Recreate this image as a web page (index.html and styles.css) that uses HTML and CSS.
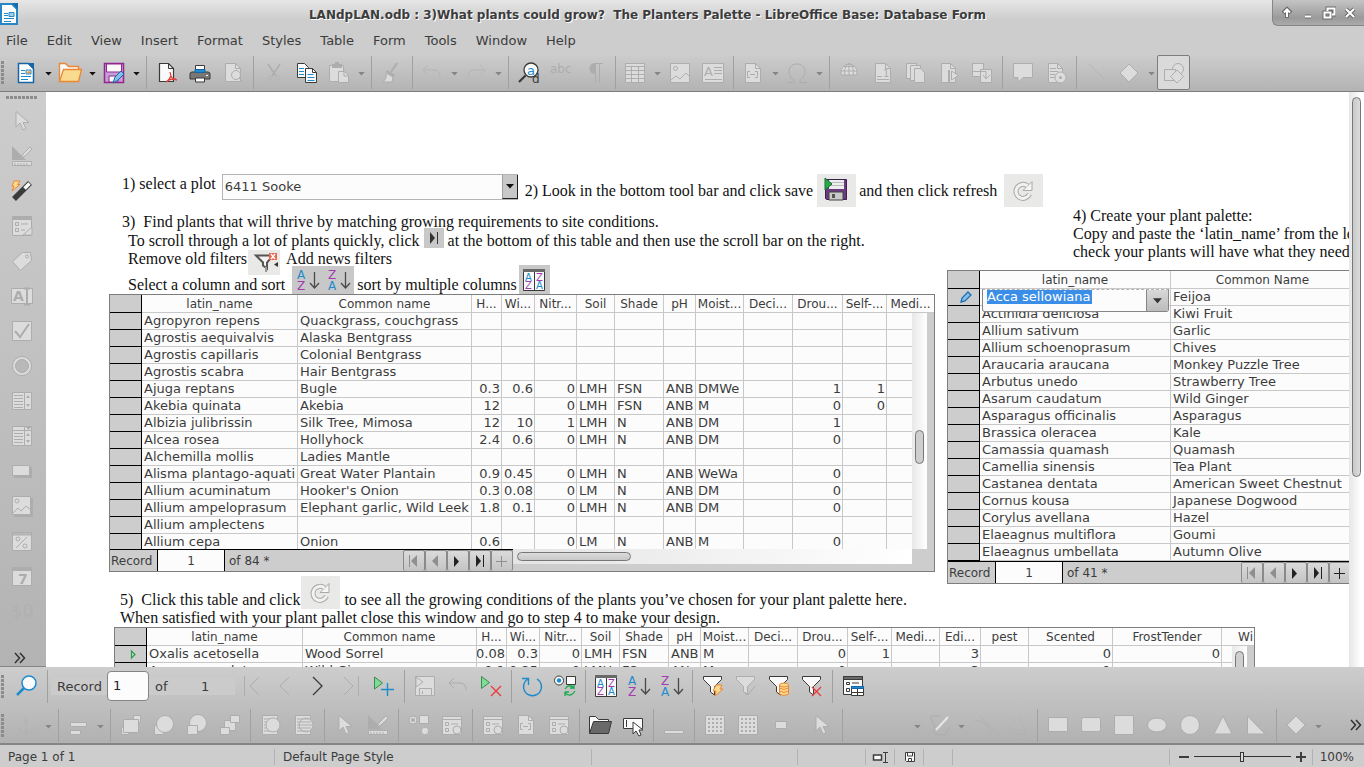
FILE: index.html
```html
<!DOCTYPE html>
<html lang="en">
<head>
<meta charset="utf-8">
<title>LANdpLAN.odb : 3)What plants could grow? The Planters Palette - LibreOffice Base: Database Form</title>
<link rel="stylesheet" href="styles.css">
</head>
<body>
<svg class="sprite" aria-hidden="true">
  <symbol id="new" viewBox="0 0 24 24"><path d="M4.500 2.500h10l5 5v14h-15z" fill="#fff" stroke="#1565a8" stroke-width="1.500"/><path d="M13 2h7v7z" fill="#1565a8" stroke="none"/><path d="M7 9.500h4M7 12.500h4M7 15.500h10M7 18.500h7" stroke="#1e8bcd"/><path d="M12 9h5v4h-5z" fill="#fed7a5" stroke="#1e8bcd"/><path d="M13 12l2-2 2 2z" fill="#ed8733" stroke="none"/></symbol>
  <symbol id="open" viewBox="0 0 24 24"><path d="M1.500 20V2.500h6l3 3h10V9" fill="#fafafa" stroke="#ed8733" stroke-width="1.300"/><path d="M1.500 20.500l4-12h18l-3 12z" fill="#f8db8f" stroke="#ed8733" stroke-width="1.300"/></symbol>
  <symbol id="save" viewBox="0 0 24 24"><path d="M2.500 2.500h19v19h-19z" fill="#c5a0d8" stroke="#92278f" stroke-width="1.500"/><path d="M4.500 3h15v8h-15zM7 21v-6h9v6z" fill="#fafafa" stroke="#92278f"/><path d="M11 22l2-6 6-6 3 3-6 6z" fill="#83beec" stroke="#1565a8"/></symbol>
  <symbol id="pdf" viewBox="0 0 24 24"><path d="M4.500 2.500h9l5 5v13h-14z" fill="#fafafa" stroke="#3a3a38" stroke-width="1.200"/><path d="M13.500 2.500v5h5" stroke="#3a3a38"/><path d="M15 11c1 6 2 7 7 8M16 14c-1 4-3 6-5 7M12 20c3-2 6-2 9-2" stroke="#e2403d" stroke-width="1.300"/></symbol>
  <symbol id="print" viewBox="0 0 24 24"><path d="M7.500 9V4.500h9V9" fill="#fafafa" stroke="#3a3a38"/><path d="M2 13q0-2 2-2h16q2 0 2 2v5H2z" fill="#797774" stroke="#3a3a38"/><path d="M7 8.500h10v3H7z" fill="#1e8bcd" stroke="#1565a8"/><path d="M7.500 17h9v4h-9z" fill="#fafafa" stroke="#3a3a38"/><path d="M18 14.500h2" stroke="#fff"/></symbol>
  <symbol id="preview" viewBox="0 0 24 24"><path class="f" d="M4.500 2.500h10l5 5v13h-15z"/><path d="M14.500 2.500v5h5"/><circle class="f" cx="15" cy="14" r="4.500"/><path d="M18 17l4 4"/></symbol>
  <symbol id="cut" viewBox="0 0 24 24"><path d="M6 3l8 12M18 3l-8 12" stroke-width="1.500"/><circle cx="8" cy="17" r="2" opacity=".4"/><circle cx="16" cy="17" r="2" opacity=".4"/></symbol>
  <symbol id="copy" viewBox="0 0 24 24"><path class="f" d="M2.500 2.500h7l4 4v10h-11z"/><path class="f" d="M10.500 7.500h7l4 4v10h-11z"/><path d="M17.500 7.500v4h4"/><path class="blue" d="M4 7.500h5M4 10.500h5M4 13.500h5M12.500 13.500h6M12.500 16.500h7M12.500 19.500h7"/></symbol>
  <symbol id="paste" viewBox="0 0 24 24"><path class="f" d="M2.500 4.500h14v16h-14z"/><path class="s" d="M5 3h3V1h4v2h3v4H5z"/><path class="f" d="M11.500 10.500h6l4 4v7h-10z"/><path d="M17 10.500v4.500h4"/></symbol>
  <symbol id="brush" viewBox="0 0 24 24"><path d="M17 2l-6 9" stroke-width="2"/><path class="s" d="M7 9l8 5-1 2-8-5z"/><path class="f" d="M6 12l7 4-1 5H3q4-3 3-9z"/></symbol>
  <symbol id="undo" viewBox="0 0 24 24"><path d="M8 4L3 9l5 5M3 9h12q5 1 5 7"/></symbol>
  <symbol id="redo" viewBox="0 0 24 24"><path d="M16 4l5 5-5 5M21 9H9q-5 1-5 7"/></symbol>
  <symbol id="find" viewBox="0 0 24 24"><circle cx="14" cy="9" r="7" fill="#fafafa" stroke="#3a3a38" stroke-width="1.300"/><path d="M8.500 14.500l-6.500 6.500" stroke="#3a3a38" stroke-width="2.200"/><text x="10" y="14" font-size="13" fill="#1e8bcd">a</text><text x="15" y="22" font-size="12" fill="#3a3a38">d</text></symbol>
  <symbol id="abc" viewBox="0 0 24 24"><text x="0" y="12" font-size="12" class="s">abc</text></symbol>
  <symbol id="pilcrow" viewBox="0 0 24 24"><path class="s" d="M12 2a5 5 0 0 0 0 11z"/><path d="M12.500 2v20M16.500 2v20M11 2.500h9"/></symbol>
  <symbol id="table" viewBox="0 0 24 24"><path class="f" d="M2.500 2.500h19v19h-19z"/><path d="M2 5.500h20M2 9.500h20M2 13.500h20M2 17.500h20M8.500 6v15M15.500 6v15"/></symbol>
  <symbol id="image" viewBox="0 0 24 24"><path class="f" d="M2.500 2.500h19v19h-19z"/><circle cx="7.500" cy="7.500" r="2"/><path d="M3 19l5-4 4 3 6-6 4 4"/></symbol>
  <symbol id="textbox" viewBox="0 0 24 24"><path class="f" d="M1.500 2.500h21v19h-21z"/><text x="3" y="15" font-size="13" class="s">A</text><path d="M13 6.500h8M13 9.500h8M13 12.500h8M4 18.500h17"/></symbol>
  <symbol id="field" viewBox="0 0 24 24"><path class="f" d="M4.500 2.500h10l5 5v14h-15z"/><path d="M14.500 2.500v5h5M9 10.500H6.500v6H9M14 10.500h2.500v6H14M9 13.500h5"/></symbol>
  <symbol id="omega" viewBox="0 0 24 24"><path d="M2 21.500h7v-2C1 14 3 3 12 3s11 11 3 16.500v2h7"/></symbol>
  <symbol id="globe" viewBox="0 0 24 24"><path class="f" d="M4.500 14a8 8 0 1 1 15 0z"/><path d="M12 2v13M4 10h16M6 5.500h12M12 2q-6 5-4 12M12 2q6 5 4 12"/></symbol>
  <symbol id="footnote" viewBox="0 0 24 24"><path class="f" d="M4.500 2.500h10l5 5v14h-15z"/><path d="M14.500 2.500v5h5M6 15.500h5M6 18.500h12"/><text x="12" y="16" font-size="10" class="s">1</text></symbol>
  <symbol id="pages" viewBox="0 0 24 24"><path class="f" d="M2.500 2.500h10v15h-10z"/><path class="f" d="M6.500 4.500h10v15h-10z"/><path class="f" d="M10.500 7.500h6l4 4v10h-10z"/></symbol>
  <symbol id="bookmark" viewBox="0 0 24 24"><path class="f" d="M4.500 2.500h9l5 5v14h-14z"/><path d="M13.500 2.500v5h5"/><path d="M12 9v13" stroke-width="2"/><path class="f" d="M14.500 10l7 4.500-7 4.500z"/></symbol>
  <symbol id="xref" viewBox="0 0 24 24"><path class="f" d="M2.500 2.500h11v13h-11z"/><path class="f" d="M10.500 8.500h11v13h-11z"/><path d="M3 10.500h13v7M13 14l3 4 4-4"/></symbol>
  <symbol id="comment" viewBox="0 0 24 24"><path class="f" d="M2.500 2.500h19v14H12l-5 5v-5H2.500z"/></symbol>
  <symbol id="track" viewBox="0 0 24 24"><path class="f" d="M4.500 2.500h9l5 5v14h-14z"/><path d="M13.500 2.500v5h5M6 7.500h6M6 10.500h8M6 13.500h5M6 16.500h5"/><circle class="f" cx="16.500" cy="16.500" r="5.500"/><circle class="s" cx="16.500" cy="16.500" r="1.500"/></symbol>
  <symbol id="line" viewBox="0 0 24 24"><path d="M4 3l16 16"/></symbol>
  <symbol id="diamond" viewBox="0 0 24 24"><path class="f" d="M12 3l9 9-9 9-9-9z"/></symbol>
  <symbol id="shapes" viewBox="0 0 24 24"><circle class="f" cx="16" cy="8" r="5.500"/><path class="f" d="M2.500 8.500h11v11h-11z"/><path class="f" d="M15 9l6.500 6.500L15 22l-6.500-6.500z"/></symbol>
  <symbol id="pointer" viewBox="0 0 24 24"><path class="f" d="M6 2.500v15.500l4-4 3 7 3-1.500-3-6h6z"/></symbol>
  <symbol id="design" viewBox="0 0 24 24"><path class="s" d="M2 2l14 14H2z"/><path d="M11 14l2-4 7-7 2 2-7 7z" class="f"/><path class="f" d="M2.500 17.500h19v4h-19z"/><path d="M5 19v2M8 19v2M11 19v2M14 19v2M17 19v2"/></symbol>
  <symbol id="wand" viewBox="0 0 24 24"><path d="M4 20L20 4" stroke="#3a3a38" stroke-width="5.500"/><path d="M14.500 9.500L19.500 4.500" stroke="#fafafa" stroke-width="3.500"/><path d="M4 2h6L7.500 5.500H10L2 12l2-5H2z" fill="#f8db8f" stroke="#ed8733"/></symbol>
  <symbol id="formprops" viewBox="0 0 24 24"><path class="f" d="M2.500 2.500h19v19h-19z"/><path class="s" d="M2 2h20v4H2z"/><path d="M5.500 8.500h3v3h-3zM5.500 14.500h3v3h-3zM11 10h7M11 16h4"/><path class="f" d="M22 13v8h-9z"/></symbol>
  <symbol id="tag" viewBox="0 0 24 24"><path class="f" d="M2.500 12.500l10-9h8l1 8-11 10z"/><circle cx="17" cy="7.500" r="1.500"/></symbol>
  <symbol id="textfield" viewBox="0 0 24 24"><path class="f" d="M1.500 4.500h21v15h-21z"/><text x="3" y="17" font-size="14" font-weight="bold" class="s">A</text><path d="M14 4.500h6M14 20.500h6M17 5v15" stroke-width="2"/></symbol>
  <symbol id="check" viewBox="0 0 24 24"><path class="f" d="M2.500 2.500h19v19h-19z"/><path d="M5 12l5 6 9-13" stroke-width="2"/></symbol>
  <symbol id="radio" viewBox="0 0 24 24"><circle cx="12" cy="12" r="9.500" class="f"/><circle cx="12" cy="12" r="6.500" fill="#b8b8b8"/></symbol>
  <symbol id="listbox" viewBox="0 0 24 24"><path class="f" d="M2.500 3.500h19v17h-19z"/><path d="M14.500 4v16M4 6.500h9M4 9.500h9M4 12.500h9M4 15.500h9M4 18.500h9"/><path class="s" d="M16 9h4l-2-3zM16 15h4l-2 3z"/></symbol>
  <symbol id="combo" viewBox="0 0 24 24"><path class="f" d="M2.500 2.500h19v19h-19z"/><path d="M14.500 2v19M2 6.500h19M4 9.500h9M4 12.500h9M4 15.500h9M4 18.500h9"/><path class="s" d="M15 2h7l-3.500 4zM16 12h4l-2-3zM16 16h4l-2 3z"/></symbol>
  <symbol id="push" viewBox="0 0 24 24"><path class="s" d="M4 8h18v11H4z"/><path class="f" d="M2.500 6.500h17v10h-17z"/></symbol>
  <symbol id="imgbutton" viewBox="0 0 24 24"><path class="s" d="M4 4h19v19H4z"/><path class="f" d="M2.500 2.500h18v18h-18z"/><circle cx="7" cy="7" r="2"/><path d="M3 19l5-5 3 3 5-5 5 4"/></symbol>
  <symbol id="percent" viewBox="0 0 24 24"><path class="f" d="M2.500 3.500h19v18h-19zM2.500 3v3h19V3"/><path d="M6 19L17 8"/><circle cx="8" cy="10" r="2"/><circle cx="15" cy="17" r="2"/></symbol>
  <symbol id="date" viewBox="0 0 24 24"><path class="f" d="M2.500 5.500h19v16h-19z"/><path class="s" d="M2 3h20v4H2z"/><text x="8" y="20" font-size="14" font-weight="bold" class="s">7</text></symbol>
  <symbol id="currency" viewBox="0 0 24 24"><text x="1" y="18" font-size="18" class="s">$0</text></symbol>
  <symbol id="magnify" viewBox="0 0 24 24"><circle cx="14" cy="9" r="7" fill="#fafafa" stroke="#1e8bcd" stroke-width="1.500"/><path d="M9 14l-7 7" stroke="#1e8bcd" stroke-width="2.500"/></symbol>
  <symbol id="first" viewBox="0 0 24 24"><path d="M4.500 2v20M19 3l-9 9 9 9"/></symbol>
  <symbol id="prev" viewBox="0 0 24 24"><path d="M16 3l-9 9 9 9"/></symbol>
  <symbol id="next" viewBox="0 0 24 24"><path d="M7 3l9 9-9 9" stroke-width="1.300"/></symbol>
  <symbol id="last" viewBox="0 0 24 24"><path d="M19.500 2v20M5 3l9 9-9 9"/></symbol>
  <symbol id="newrec" viewBox="0 0 24 24"><path d="M2.500 3l8 6-8 6z" fill="#7edc96" stroke="#3a8b4c"/><path d="M15.500 9v13M9 15.500h13" stroke="#1e8bcd" stroke-width="1.400"/></symbol>
  <symbol id="saverec" viewBox="0 0 24 24"><path class="f" d="M2.500 2.500h19v19h-19z"/><path class="f" d="M3 3l7 5-7 5zM6.500 14.500h12v7h-12z"/><path d="M9.500 17v3"/></symbol>
  <symbol id="delrec" viewBox="0 0 24 24"><path d="M2.500 2.500l8 6-8 6z" fill="#7edc96" stroke="#3a8b4c"/><path d="M12 12l10 10M22 12L12 22" stroke="#ed3d3b" stroke-width="1.400"/></symbol>
  <symbol id="refresh" viewBox="0 0 24 24"><path d="M17 5a9 9 0 1 1-9 0" stroke="#1e8bcd" stroke-width="1.400"/><path d="M2 4.500h6.500V11" stroke="#1e8bcd" stroke-width="1.400"/></symbol>
  <symbol id="refreshctl" viewBox="0 0 24 24"><circle cx="6" cy="6.500" r="4.500" fill="#fff" stroke="#3a3a38"/><circle cx="6" cy="6.500" r="2.200" fill="#1e8bcd" stroke="none"/><path d="M13.500 2.500h9v8h-9z" fill="#fafafa" stroke="#3a3a38"/><path d="M12 15q4-6 9-1v-3M21 14h-4M22 17q-4 7-10 2v3M12 18h4" stroke="#18ab50" stroke-width="1.300"/></symbol>
  <symbol id="sort" viewBox="0 0 24 24"><path d="M1.500 1.500h21v21h-21z" fill="#fafafa" stroke="#3a3a38"/><path d="M1 1h22v3H1z" fill="#696969" stroke="none"/><path d="M12.500 4v18" stroke="#3a3a38"/><g font-size="10"><text x="3" y="13" fill="#1e8bcd">A</text><text x="3" y="21" fill="#a33ab0">Z</text><text x="14" y="13" fill="#a33ab0">Z</text><text x="14" y="21" fill="#1e8bcd">A</text></g></symbol>
  <symbol id="az" viewBox="0 0 24 24"><text x="1" y="11" font-size="12" fill="#1e8bcd">A</text><text x="1" y="22" font-size="12" fill="#a33ab0">Z</text><path d="M18.500 4v16M14 15l4.500 5 4.500-5" stroke="#4a4a48" stroke-width="1.300"/></symbol>
  <symbol id="za" viewBox="0 0 24 24"><text x="1" y="11" font-size="12" fill="#a33ab0">Z</text><text x="1" y="22" font-size="12" fill="#1e8bcd">A</text><path d="M18.500 4v16M14 15l4.500 5 4.500-5" stroke="#4a4a48" stroke-width="1.300"/></symbol>
  <symbol id="funnel" viewBox="0 0 24 24"><path class="f" d="M2.500 2.500h18v3l-7 7V21l-4-3v-5.500l-7-7z"/></symbol>
  <symbol id="autofilter" viewBox="0 0 24 24"><use href="#funnel"/><path d="M15 11h6l-2 4h3l-8 7 1-5h-3z" fill="#f8db8f" stroke="#ed8733"/></symbol>
  <symbol id="applyfilter" viewBox="0 0 24 24"><use href="#funnel"/><path d="M11 18l3 3 7-9"/></symbol>
  <symbol id="stdfilter" viewBox="0 0 24 24"><use href="#funnel"/><path d="M12.500 11v9q4.500 3 9 0v-9" fill="#f8db8f" stroke="#ed8733"/><ellipse cx="17" cy="11" rx="4.500" ry="2" fill="#f8db8f" stroke="#ed8733"/><path d="M12.500 14q4.500 3 9 0M12.500 17q4.500 3 9 0" stroke="#ed8733"/></symbol>
  <symbol id="nofilter" viewBox="0 0 24 24"><use href="#funnel"/><path d="M12 13l9 9M21 13l-9 9" stroke="#ed3d3b" stroke-width="1.400"/></symbol>
  <symbol id="datasource" viewBox="0 0 24 24"><path d="M2.500 2.500h19v18h-19z" fill="#fafafa" stroke="#3a3a38"/><path d="M2.500 2.500h19v3h-19z" fill="#696969" stroke="#3a3a38"/><path d="M5.500 8.500h3v2h-3zM5.500 14.500h3v3h-3zM11 9h7" stroke="#3a3a38"/><path d="M10.500 12.500h12v9h-12zM16.500 14v7M10.500 18.500h12" fill="#fff" stroke="#3a3a38"/><path d="M10.500 12.500h12v2h-12z" fill="#1e8bcd" stroke="#1565a8"/></symbol>
  <symbol id="anchor" viewBox="0 0 24 24"><path d="M12 4v17M5 14q2 7 7 7t7-7M9 8h6"/></symbol>
  <symbol id="align" viewBox="0 0 24 24"><path class="f" d="M4.500 9.500h16v4h-16zM4.500 17.500h10v4h-10z"/></symbol>
  <symbol id="front" viewBox="0 0 24 24"><path class="f" d="M14.500 2.500h7v7h-7zM2.500 14.500h7v7h-7z"/><path class="f" d="M4.500 6.500h15v13h-15z"/></symbol>
  <symbol id="fwd" viewBox="0 0 24 24"><path class="f" d="M2.500 12.500h9v9h-9z"/><circle class="f" cx="13" cy="11" r="8.500"/></symbol>
  <symbol id="back" viewBox="0 0 24 24"><circle class="f" cx="13" cy="10" r="8.500"/><path class="f" d="M2.500 12.500h10v9h-10z"/></symbol>
  <symbol id="toback" viewBox="0 0 24 24"><path class="f" d="M6.500 7.500h11v10h-11z"/><path class="f" d="M12.500 2.500h9v7h-9zM2.500 14.500h9v7h-9z"/></symbol>
  <symbol id="wrap" viewBox="0 0 24 24"><path class="f" d="M3.500 2.500h15v19h-15z"/><path d="M5 6h12M5 9h12M5 12h12M5 15h12M5 18h12"/><circle class="f" cx="14" cy="12" r="7"/></symbol>
  <symbol id="through" viewBox="0 0 24 24"><path class="f" d="M3.500 2.500h15v19h-15z"/><circle class="f" cx="14" cy="12" r="7"/><path d="M5 6h12M5 9h14M5 12h15M5 15h14M5 18h12"/></symbol>
  <symbol id="control" viewBox="0 0 24 24"><circle class="f" cx="6" cy="7" r="4"/><circle class="s" cx="6" cy="7" r="2"/><path class="f" d="M12.500 2.500h9v8h-9z"/><circle class="f" cx="18" cy="18" r="3.500" stroke-dasharray="2 1"/></symbol>
  <symbol id="form" viewBox="0 0 24 24"><path class="f" d="M2.500 3.500h19v18h-19zM2.500 6.500h19"/><path d="M5.500 9.500h3v3h-3zM5.500 15.500h3v3h-3zM11 11h7"/><circle class="f" cx="17" cy="17" r="4"/></symbol>
  <symbol id="folder" viewBox="0 0 24 24"><path d="M1.500 20V3.500h6l3 3h10V10" fill="#fafafa" stroke="#3a3a38"/><path d="M1.500 20.500l4-12h18l-3 12z" fill="#696969" stroke="#3a3a38"/></symbol>
  <symbol id="autofocus" viewBox="0 0 24 24"><path d="M2.500 5.500h19v10h-19zM5.500 7v7" fill="#fafafa" stroke="#3a3a38"/><path d="M12 9v12l3-3 3 5 2-1-2-5h4z" fill="#fff" stroke="#3a3a38"/></symbol>
  <symbol id="ruler" viewBox="0 0 24 24"><path class="f" d="M2.500 17.500h19v3h-19z"/></symbol>
  <symbol id="dots" viewBox="0 0 24 24"><path class="f" d="M2.500 2.500h19v19h-19z"/><path d="M5 6h15M5 10h15M5 14h15M5 18h15" stroke-width="2" stroke-dasharray="2 2"/></symbol>
  <symbol id="smallrect" viewBox="0 0 24 24"><path class="f" d="M6.500 8.500h11v7h-11z"/></symbol>
  <symbol id="curve" viewBox="0 0 24 24"><path d="M12 3H3v3l4 7q-5 8 4 9t10-8"/><path d="M8 17L20 4" stroke="#e6e6e6" stroke-width="2"/></symbol>
  <symbol id="connector" viewBox="0 0 24 24"><path d="M2 8q14-2 17 14M8 3l14 15"/></symbol>
  <symbol id="polygon" viewBox="0 0 24 24"><path d="M14 3L4 13l5 8h12z" opacity=".4"/></symbol>
  <symbol id="rect" viewBox="0 0 24 24"><path class="f" d="M2.500 4.500h19v14h-19z"/></symbol>
  <symbol id="rrect" viewBox="0 0 24 24"><rect class="f" x="2.500" y="4.500" width="19" height="14" rx="2"/></symbol>
  <symbol id="square" viewBox="0 0 24 24"><path class="f" d="M2.500 2.500h19v19h-19z"/></symbol>
  <symbol id="ellipse" viewBox="0 0 24 24"><ellipse class="f" cx="12" cy="12" rx="9.500" ry="7"/></symbol>
  <symbol id="circle" viewBox="0 0 24 24"><circle class="f" cx="12" cy="12" r="9.500"/></symbol>
  <symbol id="tri" viewBox="0 0 24 24"><path class="f" d="M12 3l9 18H3z"/></symbol>
  <symbol id="rtri" viewBox="0 0 24 24"><path class="f" d="M3.500 3v18H21z"/></symbol>
  <symbol id="more" viewBox="0 0 12 12"><path d="M1 1l4.500 5L1 11M6 1l4.500 5L6 11" stroke-width="1.500"/></symbol>
  <symbol id="caret" viewBox="0 0 8 5"><path class="s" d="M0 0h8L4 4.500z"/></symbol>
  <symbol id="r-first" viewBox="0 0 14 14"><path class="s" d="M10 1v12L4 7z"/><path d="M2.500 1v12"/></symbol>
  <symbol id="r-prev" viewBox="0 0 14 14"><path class="s" d="M9 1v12L3 7z"/></symbol>
  <symbol id="r-next" viewBox="0 0 14 14"><path class="s" d="M3 2v11l5-5.500z"/></symbol>
  <symbol id="r-last" viewBox="0 0 14 14"><path class="s" d="M3 1v12l5-6z"/><path d="M10.500 1v12"/></symbol>
  <symbol id="r-new" viewBox="0 0 14 14"><path d="M6.500 2v11M1 7.500h11"/></symbol>
  <symbol id="reload" viewBox="0 0 24 24"><path d="M15.500 7a7 7 0 1 0 2 8" stroke="#a9a9a7" stroke-width="5"/><path d="M11 11.500h9V2.500l-2.500 2.500z" fill="#f5f5f3" stroke="#a9a9a7"/><path d="M15.500 7a7 7 0 1 0 2 8" stroke="#f2f2f0" stroke-width="3"/></symbol>
</svg>

<header class="chrome">
  <div class="titlebar">
    <svg class="app-icon" viewBox="0 0 18 22"><path d="M1 1h11l5 5v15H1z" fill="#fff" stroke="#2587c8" stroke-width="2"/><path d="M12 0h6v7z" fill="#1a6ba8"/><path d="M4 10.500h4M4 12.500h4M4 15.500h10M4 18.500h7" stroke="#2587c8"/><path d="M9 9.500h5v4H9z" fill="#9bd0ef" stroke="#2587c8"/></svg>
    <h1>LANdpLAN.odb : 3)What plants could grow?&nbsp; The Planters Palette - LibreOffice Base: Database Form</h1>
    <div class="win-buttons">
      <button aria-label="Keep above"><svg viewBox="0 0 14 14"><path class="wo" d="M7 2v10M3 7l4-4 4 4"/><path class="wi" d="M7 3v8M4 6.500l3-3 3 3"/></svg></button>
      <button aria-label="Minimize"><svg viewBox="0 0 14 14"><path class="wo" d="M4 10.500h6"/><path class="wi" d="M4 10.500h6"/></svg></button>
      <button aria-label="Restore"><svg viewBox="0 0 14 14"><path class="wo" d="M5.500 5V2.500h7v6H10M2.500 6.500h6v5h-6z"/><path class="wi" d="M5.500 5V2.500h7v6H10M2.500 6.500h6v5h-6z"/></svg></button>
      <button aria-label="Close"><svg viewBox="0 0 14 14"><path class="wo" d="M3 3l8 8M11 3l-8 8"/><path class="wi" d="M3 3l8 8M11 3l-8 8"/></svg></button>
    </div>
  </div>
  <nav class="menubar" aria-label="Menu">
    <button>File</button><button>Edit</button><button>View</button><button>Insert</button><button>Format</button><button>Styles</button><button>Table</button><button>Form</button><button>Tools</button><button>Window</button><button>Help</button>
  </nav>
  <div class="toolbar standard">
    <i class="grip"></i>
    <button class="tb split" aria-label="New"><svg><use href="#new"/></svg></button><button class="drop" aria-label="New menu"><svg><use href="#caret"/></svg></button>
    <button class="tb split" aria-label="Open"><svg><use href="#open"/></svg></button><button class="drop" aria-label="Open menu"><svg><use href="#caret"/></svg></button>
    <button class="tb split" aria-label="Save"><svg><use href="#save"/></svg></button><button class="drop" aria-label="Save menu"><svg><use href="#caret"/></svg></button>
    <i class="sep"></i>
    <button class="tb" aria-label="Export PDF"><svg><use href="#pdf"/></svg></button>
    <button class="tb" aria-label="Print"><svg><use href="#print"/></svg></button>
    <button class="tb off" aria-label="Preview"><svg><use href="#preview"/></svg></button>
    <i class="sep"></i>
    <button class="tb off" aria-label="Cut"><svg><use href="#cut"/></svg></button>
    <button class="tb" aria-label="Copy"><svg><use href="#copy"/></svg></button>
    <button class="tb split off" aria-label="Paste"><svg><use href="#paste"/></svg></button><button class="drop off" aria-label="Paste menu"><svg><use href="#caret"/></svg></button>
    <i class="sep"></i>
    <button class="tb off" aria-label="Clone formatting"><svg><use href="#brush"/></svg></button>
    <i class="sep"></i>
    <button class="tb split off faint" aria-label="Undo"><svg><use href="#undo"/></svg></button><button class="drop off" aria-label="Undo menu"><svg><use href="#caret"/></svg></button>
    <button class="tb split off faint" aria-label="Redo"><svg><use href="#redo"/></svg></button><button class="drop off" aria-label="Redo menu"><svg><use href="#caret"/></svg></button>
    <i class="sep"></i>
    <button class="tb" aria-label="Find and replace"><svg><use href="#find"/></svg></button>
    <button class="tb off" aria-label="Spelling"><svg><use href="#abc"/></svg></button>
    <button class="tb off" aria-label="Formatting marks"><svg><use href="#pilcrow"/></svg></button>
    <i class="sep"></i>
    <button class="tb split off" aria-label="Insert table"><svg><use href="#table"/></svg></button><button class="drop off" aria-label="Table menu"><svg><use href="#caret"/></svg></button>
    <button class="tb off" aria-label="Insert image"><svg><use href="#image"/></svg></button>
    <button class="tb off" aria-label="Insert text box"><svg><use href="#textbox"/></svg></button>
    <i class="sep"></i>
    <button class="tb split off" aria-label="Insert field"><svg><use href="#field"/></svg></button><button class="drop off" aria-label="Field menu"><svg><use href="#caret"/></svg></button>
    <button class="tb split off" aria-label="Special character"><svg><use href="#omega"/></svg></button><button class="drop off" aria-label="Character menu"><svg><use href="#caret"/></svg></button>
    <i class="sep"></i>
    <button class="tb split off" aria-label="Hyperlink"><svg><use href="#globe"/></svg></button>
    <button class="tb off" aria-label="Footnote"><svg><use href="#footnote"/></svg></button>
    <button class="tb off" aria-label="Endnote"><svg><use href="#pages"/></svg></button>
    <button class="tb off" aria-label="Bookmark"><svg><use href="#bookmark"/></svg></button>
    <button class="tb off" aria-label="Cross-reference"><svg><use href="#xref"/></svg></button>
    <i class="sep"></i>
    <button class="tb off" aria-label="Comment"><svg><use href="#comment"/></svg></button>
    <button class="tb off" aria-label="Track changes"><svg><use href="#track"/></svg></button>
    <i class="sep"></i>
    <button class="tb off faint" aria-label="Line"><svg><use href="#line"/></svg></button>
    <button class="tb split off" aria-label="Basic shapes"><svg><use href="#diamond"/></svg></button><button class="drop off" aria-label="Shapes menu"><svg><use href="#caret"/></svg></button>
    <button class="tb off pressed" aria-label="Show draw functions"><svg><use href="#shapes"/></svg></button>
  </div>
</header>

<main class="workspace">
  <aside class="side">
    <i class="grip-h"></i>
    <button class="tb off" aria-label="Select"><svg><use href="#pointer"/></svg></button>
    <button class="tb off" aria-label="Design mode"><svg><use href="#design"/></svg></button>
    <button class="tb" aria-label="Form wizards"><svg><use href="#wand"/></svg></button>
    <button class="tb off" aria-label="Form design"><svg><use href="#formprops"/></svg></button>
    <button class="tb off" aria-label="Label"><svg><use href="#tag"/></svg></button>
    <button class="tb off" aria-label="Text box"><svg><use href="#textfield"/></svg></button>
    <button class="tb off" aria-label="Check box"><svg><use href="#check"/></svg></button>
    <button class="tb off" aria-label="Option button"><svg><use href="#radio"/></svg></button>
    <button class="tb off" aria-label="List box"><svg><use href="#listbox"/></svg></button>
    <button class="tb off" aria-label="Combo box"><svg><use href="#combo"/></svg></button>
    <button class="tb off" aria-label="Push button"><svg><use href="#push"/></svg></button>
    <button class="tb off" aria-label="Image button"><svg><use href="#imgbutton"/></svg></button>
    <button class="tb off" aria-label="Formatted field"><svg><use href="#percent"/></svg></button>
    <button class="tb off" aria-label="Date field"><svg><use href="#date"/></svg></button>
    <button class="tb off faint" aria-label="Currency field"><svg><use href="#currency"/></svg></button>
    <button class="more" aria-label="More"><svg><use href="#more"/></svg></button>
  </aside>

  <article class="sheet">
    <div class="step-one">
      <label for="plot">1) select a plot</label>
      <div class="plot"><select id="plot"><option>6411 Sooke</option></select><span class="plot-arrow"><svg><use href="#caret"/></svg></span></div>
      <span>2) Look in the bottom tool bar and click save</span>
      <svg class="pic disk" viewBox="0 0 39 33"><path d="M8.500 5.500h21v20h-20l-1-1z" fill="#6b3a80" stroke="#3c1d4c"/><path d="M12 6h15v9H12z" fill="#eee"/><path d="M12 8.500h15M12 11.500h15" stroke="#bbb"/><path d="M12 18h14v8H12z" fill="#c9c9c9" stroke="#444"/><path d="M15 20h3v4h-3z" fill="#555"/><path d="M8 4l7 6-7 6z" fill="#2aa84c" stroke="#157030"/></svg>
      <span>and then click refresh</span>
      <span class="pic reload"><svg><use href="#reload"/></svg></span>
    </div>

    <div class="columns">
      <section class="find-plants">
        <div class="lines">
          <p class="lead">3)&nbsp; Find plants that will thrive by matching growing requirements to site conditions.</p>
          <p class="in">To scroll through a lot of plants quickly, click <span class="pic jump"><svg><use href="#r-last"/></svg></span> at the bottom of this table and then use the scroll bar on the right.</p>
          <p class="in">Remove old filters<svg class="pic filter" viewBox="0 0 32 25"><path d="M8 5.500h17l-6 7v6l-4-3v-3z" fill="#f3f3f1" stroke="#555" stroke-width="2"/><path d="M18 17v5" stroke="#999" stroke-width="2"/><path d="M21 3h8v7h-8z" fill="#e8654c"/><path d="M23 4l4 5M27 4l-4 5" stroke="#fff" stroke-width="1.500"/><path d="M30 12v5l-4-2.500z" fill="#333"/></svg><span>Add news filters</span></p>
          <p class="in tall">Select a column and sort <span class="pic sorts"><svg><use href="#az"/></svg><svg><use href="#za"/></svg></span>sort by multiple columns<span class="pic sorter"><svg><use href="#sort"/></svg></span></p>
        </div>
        <div class="control plants">
          <div class="rows">
            <table>
              <colgroup><col class="c-h"><col class="c-latin"><col class="c-common"><col class="c30"><col class="c33"><col class="c42"><col class="c38"><col class="c49"><col class="c32"><col class="c48"><col class="c49"><col class="c50"><col class="c44"><col class="c48"></colgroup>
              <thead><tr><th class="h"></th><th>latin_name</th><th>Common name</th><th>H...</th><th>Wi...</th><th>Nitr...</th><th>Soil</th><th>Shade</th><th>pH</th><th>Moist...</th><th>Deci...</th><th>Drou...</th><th>Self-...</th><th>Medi...</th></tr></thead>
              <tbody>
                <tr><td class="h"></td><td>Agropyron repens</td><td>Quackgrass, couchgrass</td><td></td><td></td><td></td><td></td><td></td><td></td><td></td><td></td><td></td><td></td><td></td></tr>
                <tr><td class="h"></td><td>Agrostis aequivalvis</td><td>Alaska Bentgrass</td><td></td><td></td><td></td><td></td><td></td><td></td><td></td><td></td><td></td><td></td><td></td></tr>
                <tr><td class="h"></td><td>Agrostis capillaris</td><td>Colonial Bentgrass</td><td></td><td></td><td></td><td></td><td></td><td></td><td></td><td></td><td></td><td></td><td></td></tr>
                <tr><td class="h"></td><td>Agrostis scabra</td><td>Hair Bentgrass</td><td></td><td></td><td></td><td></td><td></td><td></td><td></td><td></td><td></td><td></td><td></td></tr>
                <tr><td class="h"></td><td>Ajuga reptans</td><td>Bugle</td><td class="n">0.3</td><td class="n">0.6</td><td class="n">0</td><td>LMH</td><td>FSN</td><td>ANB</td><td>DMWe</td><td></td><td class="n">1</td><td class="n">1</td><td></td></tr>
                <tr><td class="h"></td><td>Akebia quinata</td><td>Akebia</td><td class="n">12</td><td></td><td class="n">0</td><td>LMH</td><td>FSN</td><td>ANB</td><td>M</td><td></td><td class="n">0</td><td class="n">0</td><td></td></tr>
                <tr><td class="h"></td><td>Albizia julibrissin</td><td>Silk Tree, Mimosa</td><td class="n">12</td><td class="n">10</td><td class="n">1</td><td>LMH</td><td>N</td><td>ANB</td><td>DM</td><td></td><td class="n">1</td><td></td><td></td></tr>
                <tr><td class="h"></td><td>Alcea rosea</td><td>Hollyhock</td><td class="n">2.4</td><td class="n">0.6</td><td class="n">0</td><td>LMH</td><td>N</td><td>ANB</td><td>DM</td><td></td><td class="n">0</td><td></td><td></td></tr>
                <tr><td class="h"></td><td>Alchemilla mollis</td><td>Ladies Mantle</td><td></td><td></td><td></td><td></td><td></td><td></td><td></td><td></td><td></td><td></td><td></td></tr>
                <tr><td class="h"></td><td>Alisma plantago-aquati</td><td>Great Water Plantain</td><td class="n">0.9</td><td class="n">0.45</td><td class="n">0</td><td>LMH</td><td>N</td><td>ANB</td><td>WeWa</td><td></td><td class="n">0</td><td></td><td></td></tr>
                <tr><td class="h"></td><td>Allium acuminatum</td><td>Hooker's Onion</td><td class="n">0.3</td><td class="n">0.08</td><td class="n">0</td><td>LM</td><td>N</td><td>ANB</td><td>DM</td><td></td><td class="n">0</td><td></td><td></td></tr>
                <tr><td class="h"></td><td>Allium ampeloprasum</td><td>Elephant garlic, Wild Leek</td><td class="n">1.8</td><td class="n">0.1</td><td class="n">0</td><td>LMH</td><td>N</td><td>ANB</td><td>DM</td><td></td><td class="n">0</td><td></td><td></td></tr>
                <tr><td class="h"></td><td>Allium amplectens</td><td></td><td></td><td></td><td></td><td></td><td></td><td></td><td></td><td></td><td></td><td></td><td></td></tr>
                <tr><td class="h"></td><td>Allium cepa</td><td>Onion</td><td class="n">0.6</td><td></td><td class="n">0</td><td>LM</td><td>N</td><td>ANB</td><td>M</td><td></td><td class="n">0</td><td></td><td></td></tr>
              </tbody>
            </table>
            <div class="vscroll"><i></i></div>
          </div>
          <div class="foot">
            <div class="recnav">
              <label for="rec1">Record</label><input id="rec1" value="1"><span>of 84 *</span>
              <button class="off" aria-label="First"><svg><use href="#r-first"/></svg></button><button class="off" aria-label="Previous"><svg><use href="#r-prev"/></svg></button><button aria-label="Next"><svg><use href="#r-next"/></svg></button><button aria-label="Last"><svg><use href="#r-last"/></svg></button><button class="off" aria-label="New"><svg><use href="#r-new"/></svg></button>
            </div>
            <div class="hscroll"><i></i></div>
          </div>
        </div>
      </section>

      <section class="palette">
        <div class="lines">
          <p>4) Create your plant palette:</p>
          <p>Copy and paste the ‘latin_name’ from the left</p>
          <p>check your plants will have what they need</p>
        </div>
        <div class="control picks">
          <div class="rows">
            <table>
              <colgroup><col class="c-h"><col class="c-pick"><col class="c-name"><col class="c48"></colgroup>
              <thead><tr><th class="h"></th><th>latin_name</th><th>Common Name</th><th></th></tr></thead>
              <tbody>
                <tr><td class="h mark"><svg viewBox="0 0 12 12"><path d="M1 11l1-4 6-6 3 3-6 6z" fill="#83beec" stroke="#1e6fb0" stroke-width="1.300"/></svg></td><td></td><td>Feijoa</td><td></td></tr>
                <tr><td class="h"></td><td>Actinidia deliciosa</td><td>Kiwi Fruit</td><td></td></tr>
                <tr><td class="h"></td><td>Allium sativum</td><td>Garlic</td><td></td></tr>
                <tr><td class="h"></td><td>Allium schoenoprasum</td><td>Chives</td><td></td></tr>
                <tr><td class="h"></td><td>Araucaria araucana</td><td>Monkey Puzzle Tree</td><td></td></tr>
                <tr><td class="h"></td><td>Arbutus unedo</td><td>Strawberry Tree</td><td></td></tr>
                <tr><td class="h"></td><td>Asarum caudatum</td><td>Wild Ginger</td><td></td></tr>
                <tr><td class="h"></td><td>Asparagus officinalis</td><td>Asparagus</td><td></td></tr>
                <tr><td class="h"></td><td>Brassica oleracea</td><td>Kale</td><td></td></tr>
                <tr><td class="h"></td><td>Camassia quamash</td><td>Quamash</td><td></td></tr>
                <tr><td class="h"></td><td>Camellia sinensis</td><td>Tea Plant</td><td></td></tr>
                <tr><td class="h"></td><td>Castanea dentata</td><td>American Sweet Chestnut</td><td></td></tr>
                <tr><td class="h"></td><td>Cornus kousa</td><td>Japanese Dogwood</td><td></td></tr>
                <tr><td class="h"></td><td>Corylus avellana</td><td>Hazel</td><td></td></tr>
                <tr><td class="h"></td><td>Elaeagnus multiflora</td><td>Goumi</td><td></td></tr>
                <tr><td class="h"></td><td>Elaeagnus umbellata</td><td>Autumn Olive</td><td></td></tr>
              </tbody>
            </table>
            <div class="editor"><input aria-label="latin_name" value="Acca sellowiana"><button aria-label="Open list"><svg><use href="#caret"/></svg></button></div>
          </div>
          <div class="foot">
            <div class="recnav">
              <label for="rec2">Record</label><input id="rec2" value="1"><span>of 41 *</span>
              <button class="off" aria-label="First"><svg><use href="#r-first"/></svg></button><button class="off" aria-label="Previous"><svg><use href="#r-prev"/></svg></button><button aria-label="Next"><svg><use href="#r-next"/></svg></button><button aria-label="Last"><svg><use href="#r-last"/></svg></button><button aria-label="New"><svg><use href="#r-new"/></svg></button>
            </div>
          </div>
        </div>
      </section>
    </div>

    <section class="chosen">
      <div class="lines">
        <p class="with-pic">5)&nbsp; Click this table and click<span class="pic reload"><svg><use href="#reload"/></svg></span> to see all the growing conditions of the plants you’ve chosen for your plant palette here.</p>
        <p>When satisfied with your plant pallet close this window and go to step 4 to make your design.</p>
      </div>
      <div class="control conditions">
        <div class="rows">
          <table>
            <colgroup><col class="c-h"><col class="c-latin"><col class="c-common"><col class="c30"><col class="c33"><col class="c42"><col class="c38"><col class="c49"><col class="c32"><col class="c48"><col class="c49"><col class="c50"><col class="c44"><col class="c48"><col class="c41"><col class="c48"><col class="c84"><col class="c109"><col class="c48"></colgroup>
            <thead><tr><th class="h"></th><th>latin_name</th><th>Common name</th><th>H...</th><th>Wi...</th><th>Nitr...</th><th>Soil</th><th>Shade</th><th>pH</th><th>Moist...</th><th>Deci...</th><th>Drou...</th><th>Self-...</th><th>Medi...</th><th>Edi...</th><th>pest</th><th>Scented</th><th>FrostTender</th><th>Wi</th></tr></thead>
            <tbody>
              <tr><td class="h mark"><svg viewBox="0 0 12 12"><path d="M4.500 3v7l3.500-3.500z" fill="#bfe8c8" stroke="#2f9e4f" stroke-width="1.300"/></svg></td><td>Oxalis acetosella</td><td>Wood Sorrel</td><td class="n">0.08</td><td class="n">0.3</td><td class="n">0</td><td>LMH</td><td>FSN</td><td>ANB</td><td>M</td><td></td><td class="n">0</td><td class="n">1</td><td></td><td class="n">3</td><td></td><td class="n">0</td><td class="n">0</td><td></td></tr>
              <tr><td class="h"></td><td>Asarum caudatum</td><td>Wild Ginger</td><td class="n">0.1</td><td class="n">0.25</td><td class="n">0</td><td>LMH</td><td>FS</td><td>AN</td><td>M</td><td></td><td class="n">0</td><td></td><td></td><td class="n">3</td><td></td><td class="n">1</td><td></td><td></td></tr>
            </tbody>
          </table>
          <div class="vscroll"><i></i></div>
        </div>
      </div>
    </section>
  </article>
  <div class="page-scroll"><i></i></div>
</main>

<footer class="bottom">
  <div class="bars">
    <div class="toolbar">
      <i class="grip"></i>
      <button class="tb" aria-label="Find record"><svg><use href="#magnify"/></svg></button>
      <i class="sep"></i>
      <div class="record"><label for="record">Record</label><input id="record" value="1"><span>of</span><output>1</output></div>
      <button class="tb off" aria-label="First record"><svg><use href="#first"/></svg></button>
      <button class="tb off" aria-label="Previous record"><svg><use href="#prev"/></svg></button>
      <button class="tb" aria-label="Next record"><svg><use href="#next"/></svg></button>
      <button class="tb off" aria-label="Last record"><svg><use href="#last"/></svg></button>
      <button class="tb" aria-label="New record"><svg><use href="#newrec"/></svg></button>
      <i class="sep"></i>
      <button class="tb off" aria-label="Save record"><svg><use href="#saverec"/></svg></button>
      <button class="tb off" aria-label="Undo data entry"><svg><use href="#undo"/></svg></button>
      <button class="tb" aria-label="Delete record"><svg><use href="#delrec"/></svg></button>
      <i class="sep"></i>
      <button class="tb" aria-label="Refresh"><svg><use href="#refresh"/></svg></button>
      <button class="tb" aria-label="Refresh control"><svg><use href="#refreshctl"/></svg></button>
      <i class="sep"></i>
      <button class="tb" aria-label="Sort"><svg><use href="#sort"/></svg></button>
      <button class="tb" aria-label="Sort ascending"><svg><use href="#az"/></svg></button>
      <button class="tb" aria-label="Sort descending"><svg><use href="#za"/></svg></button>
      <i class="sep"></i>
      <button class="tb" aria-label="AutoFilter"><svg><use href="#autofilter"/></svg></button>
      <button class="tb off" aria-label="Apply filter"><svg><use href="#applyfilter"/></svg></button>
      <button class="tb" aria-label="Form-based filters"><svg><use href="#stdfilter"/></svg></button>
      <button class="tb" aria-label="Reset filter"><svg><use href="#nofilter"/></svg></button>
      <i class="sep"></i>
      <button class="tb" aria-label="Data source as table"><svg><use href="#datasource"/></svg></button>
    </div>
    <div class="toolbar">
      <i class="grip"></i>
      <button class="tb split off faint" aria-label="Anchor"><svg><use href="#anchor"/></svg></button><button class="drop off" aria-label="Anchor menu"><svg><use href="#caret"/></svg></button>
      <i class="sep"></i>
      <button class="tb split off" aria-label="Align"><svg><use href="#align"/></svg></button><button class="drop off" aria-label="Align menu"><svg><use href="#caret"/></svg></button>
      <i class="sep"></i>
      <button class="tb off" aria-label="Bring to front"><svg><use href="#front"/></svg></button>
      <button class="tb off" aria-label="Forward one"><svg><use href="#fwd"/></svg></button>
      <button class="tb off" aria-label="Back one"><svg><use href="#back"/></svg></button>
      <button class="tb off" aria-label="Send to back"><svg><use href="#toback"/></svg></button>
      <i class="sep"></i>
      <button class="tb off" aria-label="To foreground"><svg><use href="#wrap"/></svg></button>
      <button class="tb off" aria-label="To background"><svg><use href="#through"/></svg></button>
      <i class="sep"></i>
      <button class="tb off" aria-label="Select"><svg><use href="#pointer"/></svg></button>
      <button class="tb off" aria-label="Design mode"><svg><use href="#design"/></svg></button>
      <i class="sep"></i>
      <button class="tb off" aria-label="Control"><svg><use href="#control"/></svg></button>
      <button class="tb off" aria-label="Form"><svg><use href="#form"/></svg></button>
      <i class="sep"></i>
      <button class="tb off" aria-label="Form navigator"><svg><use href="#form"/></svg></button>
      <button class="tb off" aria-label="Add field"><svg><use href="#field"/></svg></button>
      <button class="tb off" aria-label="Activation order"><svg><use href="#form"/></svg></button>
      <i class="sep"></i>
      <button class="tb" aria-label="Open in design mode"><svg><use href="#folder"/></svg></button>
      <button class="tb" aria-label="Automatic control focus"><svg><use href="#autofocus"/></svg></button>
      <i class="sep"></i>
      <button class="tb off" aria-label="Position and size"><svg><use href="#ruler"/></svg></button>
      <i class="sep"></i>
      <button class="tb off" aria-label="Display grid"><svg><use href="#dots"/></svg></button>
      <button class="tb off" aria-label="Snap to grid"><svg><use href="#dots"/></svg></button>
      <button class="tb off" aria-label="Helplines"><svg><use href="#smallrect"/></svg></button>
      <i class="sep blank"></i>
      <button class="tb off" aria-label="Select object"><svg><use href="#pointer"/></svg></button>
      <i class="sep"></i>
      <button class="tb off faint" aria-label="Insert line"></button>
      <button class="tb off faint" aria-label="Lines and arrows"></button><button class="drop off" aria-label="Lines menu"><svg><use href="#caret"/></svg></button>
      <button class="tb off" aria-label="Curves and polygons"><svg><use href="#curve"/></svg></button><button class="drop off" aria-label="Curves menu"><svg><use href="#caret"/></svg></button>
      <button class="tb off faint" aria-label="Curve"><svg><use href="#connector"/></svg></button>
      <button class="tb off faint" aria-label="Polygon"><svg><use href="#polygon"/></svg></button>
      <i class="sep"></i>
      <button class="tb off" aria-label="Rectangle"><svg><use href="#rect"/></svg></button>
      <button class="tb off" aria-label="Rounded rectangle"><svg><use href="#rrect"/></svg></button>
      <button class="tb off" aria-label="Square"><svg><use href="#square"/></svg></button>
      <button class="tb off" aria-label="Ellipse"><svg><use href="#ellipse"/></svg></button>
      <button class="tb off" aria-label="Circle"><svg><use href="#circle"/></svg></button>
      <button class="tb off" aria-label="Triangle"><svg><use href="#tri"/></svg></button>
      <button class="tb off" aria-label="Right triangle"><svg><use href="#rtri"/></svg></button>
      <i class="sep"></i>
      <button class="tb split off" aria-label="Basic shapes"><svg><use href="#diamond"/></svg></button><button class="drop off" aria-label="Shapes menu"><svg><use href="#caret"/></svg></button>
      <button class="more end" aria-label="More"><svg><use href="#more"/></svg></button>
    </div>
  </div>
  <div class="status">
    <span class="s-page">Page 1 of 1</span>
    <span class="s-style">Default Page Style</span>
    <span class="s-lang"></span>
    <span class="s-mode"></span>
    <span class="s-ins"><svg viewBox="0 0 18 14"><path d="M1.500 5h8v5h-8z" fill="#fafafa" stroke-width="1.500"/><path d="M11 2.500h5M11 12.500h5M13.500 3v9"/></svg></span>
    <span class="s-save"><svg viewBox="0 0 12 12"><path d="M1.500 1.500h9v9h-8l-1-1z" fill="#fafafa"/><path d="M3.500 2v3h5V2M4.500 10V7.500h3V10"/></svg></span>
    <span class="s-sign"></span>
    <span class="s-sel"></span>
    <span class="s-zoom"><button aria-label="Zoom out"><svg viewBox="0 0 12 12"><path d="M1 6h10" stroke-width="2"/></svg></button><input type="range" min="0" max="100" value="50" aria-label="Zoom"><button aria-label="Zoom in"><svg viewBox="0 0 12 12"><path d="M1 6h10M6 1v10" stroke-width="2"/></svg></button></span>
    <span class="s-pct">100%</span>
  </div>
</footer>
</body>
</html>
```
FILE: styles.css
```css
* { box-sizing: border-box; }
body {
  --ink: #3a3a38;
  --paper: #fafafa;
  margin: 0;
  height: 100vh;
  display: flex;
  flex-direction: column;
  overflow: hidden;
  background: #cdcdcd;
  color: #3c3c3c;
  font: 13px "DejaVu Sans", sans-serif;
}
button, input, select { font: inherit; color: inherit; margin: 0; padding: 0; border: 0; background: none; border-radius: 0; outline: 0; }
svg { display: block; fill: none; stroke: currentColor; }
svg text { stroke: none; font-family: "DejaVu Sans", sans-serif; }
p, h1 { margin: 0; }
svg.sprite { display: none; }
.f { fill: var(--paper); }
.s { fill: currentColor; stroke: none; }
.blue { stroke: #1e8bcd; }

/* window frame */
.titlebar { display: flex; align-items: flex-start; height: 28px; background: linear-gradient(#e6e6e6, #cdcdcd 20px); }
.app-icon { width: 18px; height: 22px; margin-top: 3px; stroke: none; }
.titlebar h1 { flex: 1; padding-left: 5px; text-align: center; font-size: 12px; line-height: 30px; text-shadow: 1px 1px 0 #fff; white-space: nowrap; }
.win-buttons { display: flex; width: 92px; height: 26px; padding: 0 4px; border: solid #868686; border-width: 0 0 1px 1px; border-bottom-left-radius: 6px; background: linear-gradient(#c4c4c4, #9a9a9a 18px, #ababab); }
.win-buttons button { flex: 1; display: grid; place-items: center; }
.win-buttons svg { width: 14px; height: 14px; }
.wo { stroke: #6c6c6c; stroke-width: 4; }
.wi { stroke: #fff; stroke-width: 2; }
.menubar { display: flex; height: 26px; padding-left: 6px; gap: 19px; }
.menubar button { line-height: 24px; }

/* toolbars */
.toolbar { display: flex; align-items: center; overflow: hidden; }
.toolbar > * { flex-shrink: 0; }
.standard { height: 38px; background: linear-gradient(#cdcdcd, #b3b3b3); border-bottom: 1px solid #7d7d7d; }
.grip { width: 3px; height: 23px; margin: 0 6px 0 1px; background: repeating-linear-gradient(#8c8c8c 0 3px, transparent 3px 4px); }
.tb { display: grid; place-items: center; width: 33px; height: 33px; color: var(--ink); }
.tb svg { width: 24px; height: 24px; }
.split { padding-right: 2px; }
.drop { display: grid; place-items: center; width: 11px; height: 33px; color: #111; padding-top: 3px; }
.drop svg { width: 7px; height: 4px; }
.drop.off { color: #858585; }
.tb.off { --paper: #dcdcdc; --ink: #adadad; color: #adadad; }
.tb.off .blue { stroke: #adadad; }
.faint { opacity: .55; }
.sep { width: 8px; height: 33px; background: linear-gradient(#a0a0a0, #a0a0a0) center / 1px 100% no-repeat; }
.sep.blank { background: none; }
.pressed { height: 35px; border: 1px solid #7d7d7d; border-radius: 2px; background: #dadada; }
.more { display: grid; place-items: center; color: #333; }
.more svg { width: 12px; height: 12px; }
.end { margin: 0 2px 0 auto; }

/* working area */
.workspace { flex: 1; min-height: 0; display: flex; background: #fff; }
.side { flex: none; display: flex; flex-direction: column; align-items: flex-start; width: 46px; padding: 4px 0 2px 5px; background: linear-gradient(#cdcdcd, #b3b3b3); border-bottom: 1px solid #858585; overflow: hidden; }
.side .tb { height: 35px; flex: none; width: 34px; }
.grip-h { width: 32px; height: 3px; margin: 0 0 4px 1px; flex: none; background: repeating-linear-gradient(90deg, #8c8c8c 0 3px, transparent 3px 4px); }
.side .more { margin: auto 0 0 9px; }
.sheet { flex: 1; min-width: 0; padding-top: 82px; overflow: hidden; color: #111; font: 16px/18px "Liberation Serif", serif; white-space: nowrap; }
.page-scroll { width: 15px; padding: 5px 3px; background: linear-gradient(90deg, #e6e6e6, #fff 12px); }
.page-scroll i { display: block; width: 9px; height: 380px; border: 1px solid #777; border-radius: 5px; background: linear-gradient(90deg, #c8c8c8, #dcdcdc); }

.step-one { display: flex; align-items: center; height: 33px; padding-left: 76px; }
.step-one label { align-self: flex-start; line-height: 20px; margin-right: 6px; }
.plot { position: relative; align-self: flex-start; width: 296px; margin-right: 7px; }
.plot select { display: block; width: 100%; height: 26px; padding: 0 0 1px 2px; appearance: none; border: 1px solid #b4b4b4; background: #fcfcfc; color: #3c3c3c; font: 13px "DejaVu Sans", sans-serif; }
.plot-arrow { position: absolute; top: 1px; right: 0; width: 16px; height: 24px; display: grid; place-items: center; background: #c8c8c8; border: solid #222; border-width: 0 1px 1px 0; border-left: 1px solid #a0a0a0; }
.plot-arrow svg { width: 8px; height: 5px; }
.pic { display: inline-grid; place-items: center; flex: none; background: #e9e9e7; }
.disk { width: 39px; height: 33px; margin: 0 3px 0 4px; stroke: none; }
.reload { width: 39px; height: 33px; }
.reload svg { width: 24px; height: 24px; }
.step-one .reload { margin-left: 7px; }

.columns { display: flex; align-items: flex-start; gap: 12px; padding-left: 63px; }
.find-plants { flex: none; width: 826px; padding-top: 6px; }
.find-plants .lines { padding-left: 13px; }
.find-plants p { display: flex; align-items: flex-start; height: 18px; white-space: pre; }
.find-plants .lead { height: 19px; }
.in { padding-left: 6px; }
.find-plants .tall { height: 26px; align-items: flex-end; }
.jump { width: 20px; height: 20px; margin-top: -4px; background: #c8c8c8; }
.jump svg { width: 14px; height: 14px; color: #333; }
.filter { width: 32px; height: 25px; margin: 0 6px 0 1px; stroke: none; }
.sorts { grid-auto-flow: column; width: 62px; height: 28px; margin: 0 3px; background: #c8c8c8; }
.sorts svg { width: 24px; height: 24px; }
.sorter { width: 31px; height: 29px; margin-left: 2px; background: #c8c8c8; }
.sorter svg { width: 24px; height: 24px; }

.palette { flex: 1; min-width: 0; overflow: hidden; }
.palette .lines { padding-left: 126px; margin-bottom: 9px; }

/* grid controls */
.control { border: 1px solid #7d7d7d; background: #cdcdcd; color: #3c3c3c; font: 13px/16px "DejaVu Sans", sans-serif; overflow: hidden; }
.rows { position: relative; overflow: hidden; }
.plants .rows { height: 254px; }
table { table-layout: fixed; width: 0; border-collapse: separate; border-spacing: 0; background: #fcfcfc; }
th, td { height: 17px; padding: 0 0 0 2px; border: solid #c8c8c8; border-width: 0 1px 1px 0; overflow: hidden; white-space: nowrap; }
th { height: 18px; padding: 1px 0 0; font-size: 12px; font-weight: normal; line-height: 16px; }
.n { direction: rtl; text-align: start; padding: 0 1px 0 0; }
.h { background: #cdcdcd; border-color: #000; padding: 0; }
.mark svg { width: 12px; height: 12px; margin-left: 12px; }
.c-h { width: 32px; } .c-latin { width: 156px; } .c-common { width: 174px; } .c-pick { width: 191px; } .c-name { width: 184px; }
.c30 { width: 30px; } .c32 { width: 32px; } .c33 { width: 33px; } .c38 { width: 38px; } .c41 { width: 41px; } .c42 { width: 42px; } .c44 { width: 44px; } .c48 { width: 48px; } .c49 { width: 49px; } .c50 { width: 50px; } .c84 { width: 84px; } .c109 { width: 109px; }
.vscroll { position: absolute; top: 18px; right: 0; bottom: 0; width: 22px; border-right: 7px solid #cdcdcd; background: linear-gradient(90deg, #e8e8e8, #fff); }
.vscroll i { display: block; width: 9px; height: 34px; margin: 117px 0 0 3px; border: 1px solid #777; border-radius: 5px; background: #cfcfcf; }
.conditions .vscroll i { height: 80px; margin-top: 5px; }
.foot { display: flex; align-items: flex-start; height: 22px; }
.recnav { flex: none; display: flex; align-items: center; width: 403px; height: 22px; border-top: 1px solid #000; font-size: 12px; }
.recnav label { width: 47px; padding-left: 1px; }
.recnav input { width: 68px; height: 21px; border: solid #000; border-width: 0 1px; background: #fcfcfc; text-align: center; }
.recnav span { flex: 1; padding-left: 4px; }
.recnav button { display: grid; place-items: center; width: 22px; height: 21px; border: 1px solid #8a8a8a; border-bottom-width: 0; border-radius: 2px; background: linear-gradient(#dadada, #c4c4c4); color: #222; }
.recnav button.off { color: #8f8f8f; }
.recnav svg { width: 14px; height: 14px; }
.hscroll { flex: 1; height: 15px; margin-right: 22px; padding: 3px 4px; background: linear-gradient(90deg, #e4e4e4, #fff); }
.hscroll i { display: block; width: 114px; height: 9px; border: 1px solid #777; border-radius: 5px; background: linear-gradient(#dcdcdc, #c8c8c8); }
.picks { width: 450px; }
.editor { position: absolute; left: 34px; top: 18px; width: 187px; height: 23px; display: flex; align-items: flex-start; padding-left: 4px; background: #fcfcfc; border: 1px solid #858585; border-top: 1px dashed #b0b0b0; border-radius: 0 0 3px 3px; }
.editor input { width: 105px; height: 14px; background: #3b8ee8; color: #fff; }
.editor button { width: 22px; height: 21px; margin-left: auto; display: grid; place-items: center; border-left: 1px solid #858585; background: linear-gradient(#d8d8d8, #bcbcbc); color: #333; }
.editor svg { width: 9px; height: 6px; }
.chosen { margin: -9px 0 0 68px; padding-right: 94px; }
.chosen .lines { padding-left: 6px; }
.with-pic { display: flex; align-items: flex-end; height: 34px; white-space: pre; }
.chosen .reload { margin-left: 1px; }
.conditions { height: 120px; }

/* bottom bars */
.bottom { flex: none; }
.bars { height: 78px; background: linear-gradient(#cdcdcd, #b1b1b1); border-bottom: 2px solid #858585; }
.bars .toolbar { height: 38px; }
.bars .toolbar + .toolbar { height: 40px; }
.record { display: flex; align-items: center; width: 184px; height: 17px; padding-left: 6px; background: #cbcbcb; }
.record label { width: 50px; }
.record input { width: 42px; height: 30px; padding: 0 0 2px 5px; border: 1px solid #858585; border-radius: 4px; background: #fcfcfc; color: #222; }
.record span { width: 52px; padding-left: 6px; }
.status { display: flex; align-items: center; height: 22px; padding-top: 1px; font-size: 12px; }
.status span { display: flex; align-items: center; height: 16px; border-right: 1px solid #b2b2b2; }
.status .s-page { flex: 0 1 275px; padding-left: 8px; }
.status .s-style { flex: 0 1 317px; padding-left: 8px; }
.s-lang { flex: 0 1 206px; }
.s-mode { flex: 0 1 68px; }
.s-ins { width: 29px; padding-left: 6px; }
.s-ins svg { width: 18px; height: 14px; }
.s-save { width: 29px; padding-left: 9px; }
.s-save svg { width: 12px; height: 12px; }
.s-sign { width: 29px; }
.s-sel { flex: 1; }
.s-zoom { width: 143px; padding-left: 8px; }
.s-zoom svg { width: 12px; height: 12px; }
.s-zoom input { appearance: none; width: 97px; height: 12px; margin: 0 4px; background: linear-gradient(#333, #333) center / 100% 1px no-repeat; }
.s-zoom input::-webkit-slider-thumb { appearance: none; width: 4px; height: 10px; border: 1px solid #333; background: #ddd; }
.status .s-pct { border: 0; padding: 0 10px 0 7px; }
```
